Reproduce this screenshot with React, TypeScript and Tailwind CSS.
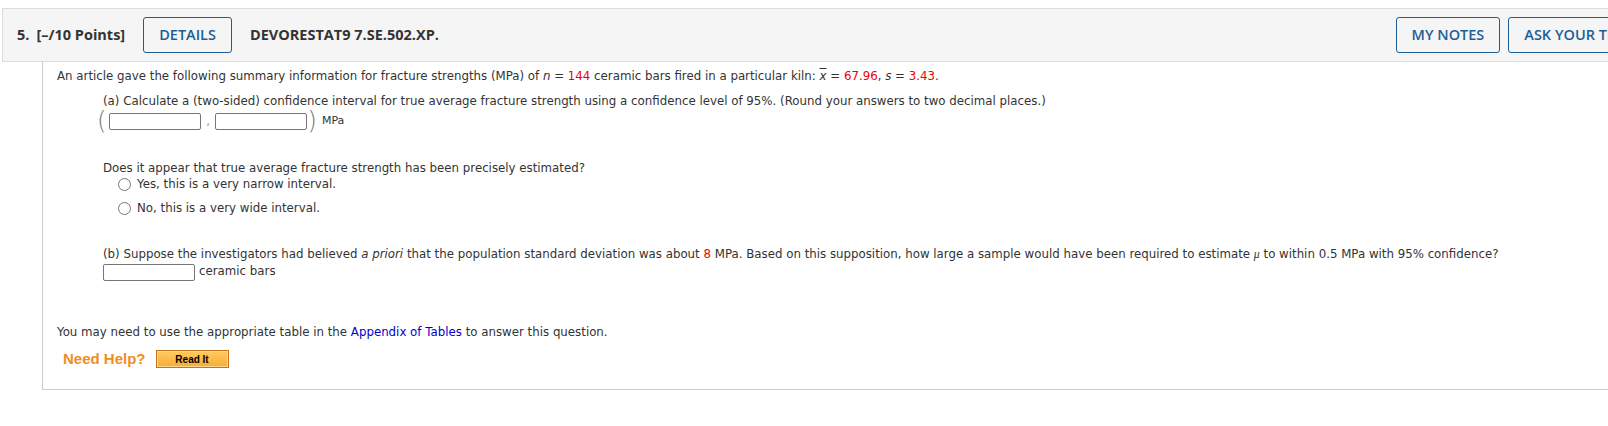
import React from 'react'

const body = { fontFamily: 'Verdana, "DejaVu Sans", sans-serif' }

function Box({ className = '' }: { className?: string }) {
  return <span className={`inline-block h-[17px] border border-[#767676] rounded-[2px] bg-white ${className}`} />
}

function Radio({ label }: { label: string }) {
  return (
    <label className="flex items-center gap-[6px]">
      <span className="inline-block w-[13px] h-[13px] rounded-full border border-[#767676] bg-white" />
      <span>{label}</span>
    </label>
  )
}

export default function App() {
  return (
    <div className="w-[1608px] h-[426px] bg-white overflow-hidden pt-[8px] pl-[2px]">
      {/* Header */}
      <div
        className="flex items-center w-[1720px] h-[54px] bg-[#f5f5f5] border border-[#dcdcdc] border-r-0 text-[#333] whitespace-nowrap"
        style={{ fontFamily: '"Open Sans", sans-serif' }}
      >
        <span className="ml-[14px] text-[14.5px] font-bold">5.</span>
        <span className="ml-[7px] text-[14.5px] font-bold">[–/10 Points]</span>
        <button className="ml-[18px] h-[36px] px-[15px] border border-[#1d5e95] rounded-[3px] text-[#1d5e95] text-[14.5px] font-semibold">
          DETAILS
        </button>
        <span className="ml-[18px] text-[14.5px] font-bold">DEVORESTAT9 7.SE.502.XP.</span>
        <div className="flex-1" />
        <button className="h-[36px] px-[15px] border border-[#1d5e95] rounded-[3px] text-[#1d5e95] text-[14.5px] font-semibold">
          MY NOTES
        </button>
        <button className="ml-[8px] mr-[44px] h-[36px] px-[15px] border border-[#1d5e95] rounded-[3px] text-[#1d5e95] text-[14.5px] font-semibold shrink-0">
          ASK YOUR TEACHER
        </button>
      </div>

      {/* Question panel */}
      <div
        className="ml-[40px] h-[328px] border-l border-b border-[#cccccc] text-[11.8px] text-[#333] pl-[14px] pt-[5px]"
        style={body}
      >
        <p className="leading-[18px]">
          An article gave the following summary information for fracture strengths (MPa) of <i>n</i> ={' '}
          <span className="text-[#ee0000]">144</span> ceramic bars fired in a particular kiln:{' '}
          <i className="overline">x</i> = <span className="text-[#ee0000]">67.96</span>, <i>s</i> ={' '}
          <span className="text-[#ee0000]">3.43</span>.
        </p>

        <div className="ml-[46px] mt-[7px]">
          <p className="leading-[18px]">
            (a) Calculate a (two-sided) confidence interval for true average fracture strength using a confidence level of 95%. (Round your answers to two decimal places.)
          </p>
          <div className="flex items-center h-[22px] -ml-[6px]">
            <span className="text-[24px] font-extralight text-[#777] leading-[22px]">(</span>
            <Box className="ml-[3px] w-[92px]" />
            <span className="mx-[5px] text-[10px] text-[#777]">,</span>
            <Box className="w-[92px]" />
            <span className="ml-[1px] text-[24px] font-extralight text-[#777] leading-[22px]">)</span>
            <span className="ml-[5px] text-[11px]">MPa</span>
          </div>

          <p className="mt-[27px] leading-[18px]">Does it appear that true average fracture strength has been precisely estimated?</p>
          <div className="ml-[15px] -mt-[2px] flex flex-col gap-[6px] leading-[18px]">
            <Radio label="Yes, this is a very narrow interval." />
            <Radio label="No, this is a very wide interval." />
          </div>

          <p className="mt-[28px] leading-[18px]">
            (b) Suppose the investigators had believed <i>a priori</i> that the population standard deviation was about{' '}
            <span className="text-[#ee0000]">8</span> MPa. Based on this supposition, how large a sample would have been required to estimate{' '}
            <i className="font-serif">μ</i> to within 0.5 MPa with 95% confidence?
          </p>
          <div className="flex items-center h-[18px]">
            <Box className="w-[92px]" />
            <span className="ml-[4px]">ceramic bars</span>
          </div>
        </div>

        <p className="mt-[42px] leading-[18px]">
          You may need to use the appropriate table in the <span className="text-[#0000cc]">Appendix of Tables</span> to answer this question.
        </p>

        <div className="mt-[7px] ml-[6px] flex items-center gap-[10px]" style={{ fontFamily: 'Arial, "Liberation Sans", sans-serif' }}>
          <span className="text-[15px] font-bold text-[#f28c1e]">Need Help?</span>
          <span className="inline-flex items-center justify-center w-[73px] h-[18px] border border-[#c8731a] bg-gradient-to-b from-[#fecb62] to-[#f8ab34] shadow-[inset_0_0_0_1px_#ffd98a] text-[10px] font-bold text-black">
            Read It
          </span>
        </div>
      </div>
    </div>
  )
}
